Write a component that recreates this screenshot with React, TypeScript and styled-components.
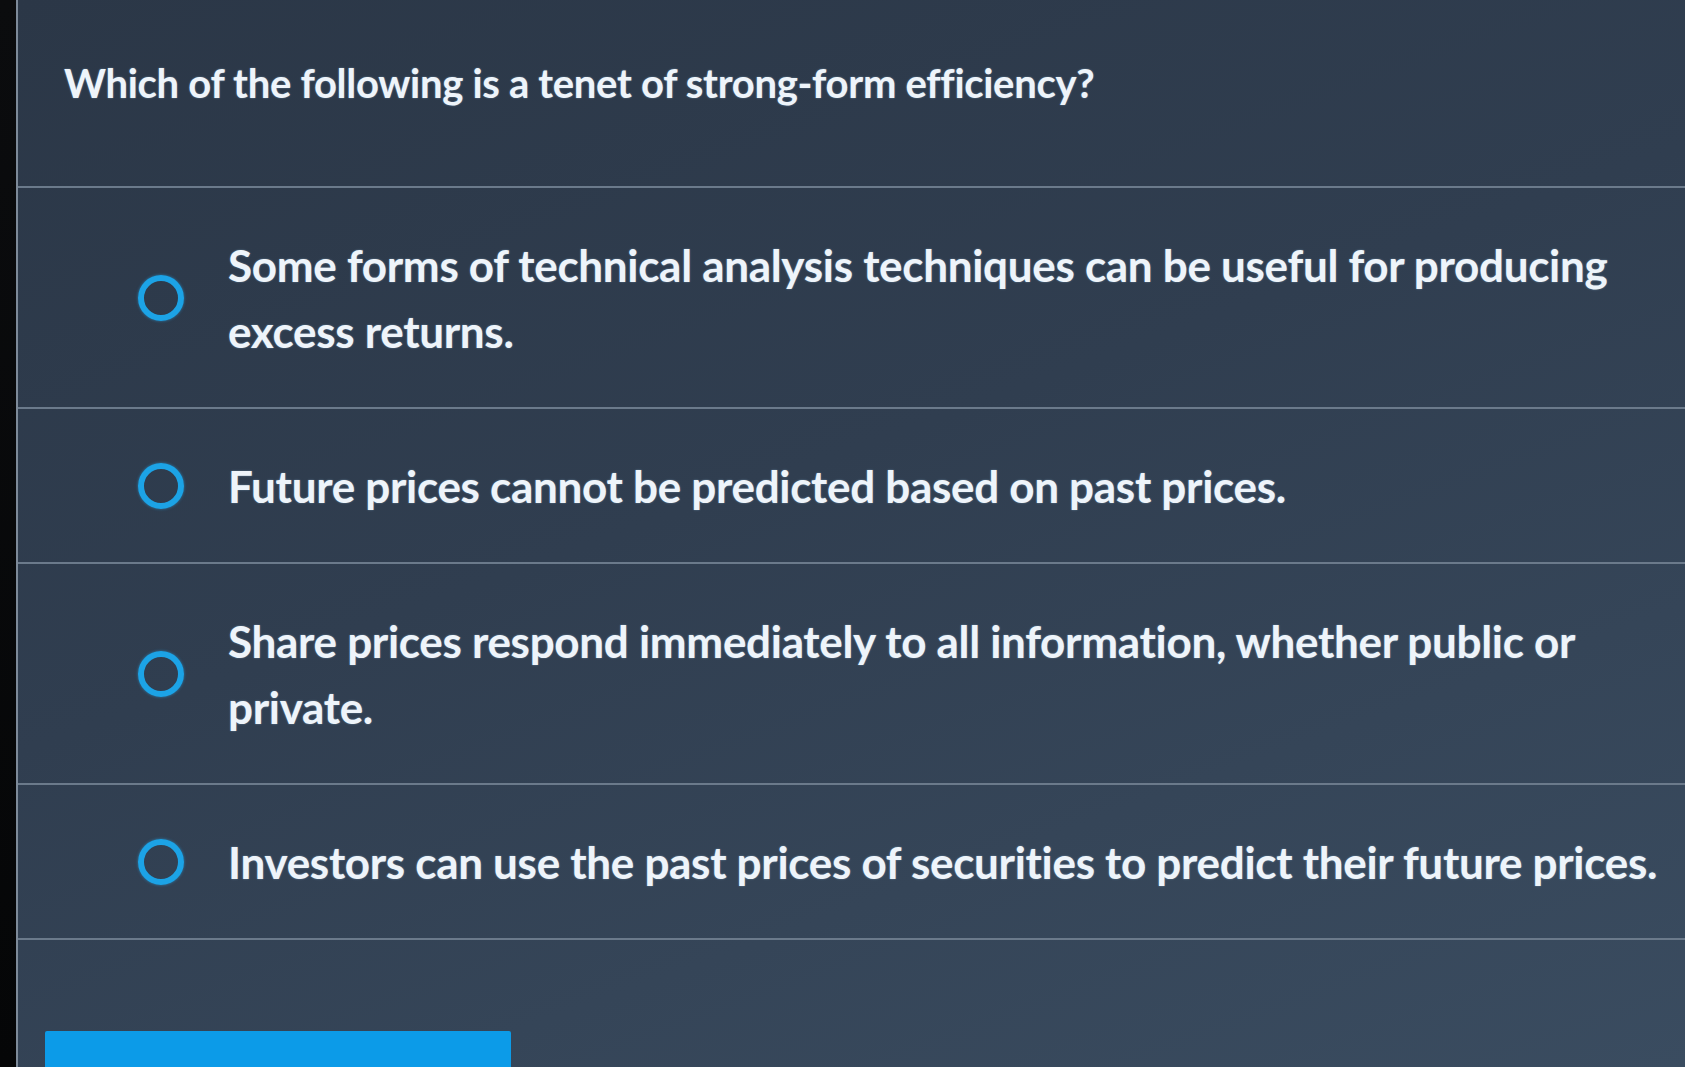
import React from 'react'
import styled, { createGlobalStyle } from 'styled-components'

const GlobalStyle = createGlobalStyle`
	html, body {
		margin: 0;
		padding: 0;
		background: #050607;
		overflow: hidden;
	}
	body {
		font-family: Lato, "Open Sans", "Liberation Sans", sans-serif;
	}
`

const options = [
	'Some forms of technical analysis techniques can be useful for producing excess returns.',
	'Future prices cannot be predicted based on past prices.',
	'Share prices respond immediately to all information, whether public or private.',
	'Investors can use the past prices of securities to predict their future prices.'
]

const App = () => {
	return (
		<>
			<GlobalStyle />
			<Screen>
				<Bezel />
				<Panel>
					<Question>Which of the following is a tenet of strong-form efficiency?</Question>
					<OptionList>
						{options.map((text) => (
							<Option key={text}>
								<Radio type='radio' name='answer' aria-label={text} />
								<OptionText>{text}</OptionText>
							</Option>
						))}
					</OptionList>
					<Footer>
						<SubmitButton type='button' aria-label='Submit' />
					</Footer>
				</Panel>
			</Screen>
		</>
	)
}

const Screen = styled.div`
	display: flex;
	width: 1685px;
	height: 1067px;
	overflow: hidden;
`

const Bezel = styled.div`
	width: 16px;
	flex-shrink: 0;
	background: linear-gradient(180deg, #0b0c0e 0%, #050607 100%);
`

const Panel = styled.main`
	flex: 1;
	display: flex;
	flex-direction: column;
	border-left: 2px solid #7d8a99;
	background: linear-gradient(160deg, #2b3747 0%, #303e50 45%, #3a4c60 100%);
	color: #eef4fa;

	& > * {
		flex-shrink: 0;
	}
`

const Question = styled.h1`
	margin: 0;
	height: 188px;
	box-sizing: border-box;
	padding: 58px 0 0 46px;
	font-size: 40px;
	line-height: 50px;
	font-weight: 700;
	letter-spacing: -0.3px;
	text-shadow: 0 0 2px rgba(170, 220, 255, 0.45);
	border-bottom: 2px solid #6b7a8b;
`

const OptionList = styled.div`
	display: flex;
	flex-direction: column;
`

const Option = styled.label`
	display: flex;
	align-items: center;
	gap: 44px;
	padding: 44px 8px 43px 120px;
	border-bottom: 2px solid #6b7a8b;
	cursor: pointer;
`

const Radio = styled.input`
	appearance: none;
	margin: 0;
	flex-shrink: 0;
	width: 46px;
	height: 46px;
	border-radius: 50%;
	border: 6px solid #1ca3e6;
	box-sizing: border-box;
	background: transparent;
	box-shadow: 0 0 3px rgba(40, 170, 240, 0.6);
`

const OptionText = styled.span`
	font-size: 44px;
	line-height: 66px;
	font-weight: 700;
	letter-spacing: -0.3px;
	text-shadow: 0 0 2px rgba(170, 220, 255, 0.45);
`

const Footer = styled.div`
	padding: 91px 0 0 27px;
`

const SubmitButton = styled.button`
	display: block;
	width: 466px;
	height: 60px;
	border: none;
	border-radius: 2px;
	background: #0c9be8;
	cursor: pointer;
`

export default App
